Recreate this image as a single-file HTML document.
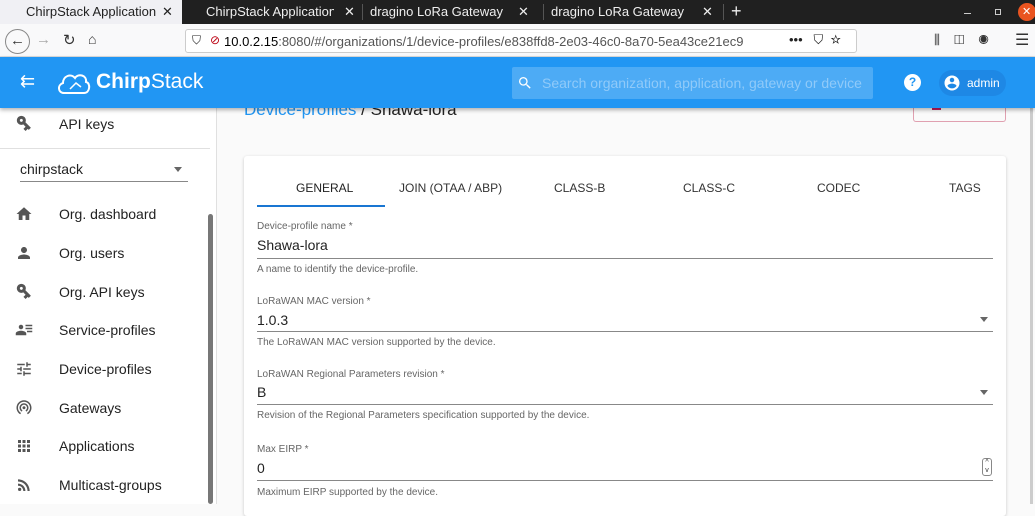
<!DOCTYPE html>
<html><head><meta charset="utf-8"><style>
*{box-sizing:border-box;margin:0;padding:0}
body{width:1035px;height:504px;overflow:hidden;font-family:"Liberation Sans",sans-serif;background:#fafafa;position:relative}
.abs{position:absolute}
.tabbar{left:0;top:0;width:1035px;height:24px;background:#202020}
.tab{top:0;height:24px;font-size:13px;color:#eee;padding-top:4px;white-space:nowrap;overflow:hidden}
.x{position:absolute;top:4px;font-size:13px;color:#eee}
.nav{left:0;top:24px;width:1035px;height:33px;background:#f9f9fa;border-bottom:1px solid #ddd}
.url{left:185px;top:29px;width:672px;height:24px;border:1px solid #ccc;border-radius:3px;background:#fff;font-size:13px;color:#222;padding:4px 0 0 38px}
.app{left:0;top:57px;width:1035px;height:51px;background:#2196f3;box-shadow:0 2px 4px rgba(0,0,0,.3);z-index:3}
.side{left:0;top:108px;width:217px;height:396px;background:#fff;border-right:1px solid #e0e0e0}
.si{left:59px;font-size:14px;color:#222}
.ic{left:15px;fill:#555}
.lbl{font-size:10px;color:#666;left:257px}
.val{font-size:14px;color:#222;left:257px}
.line{left:257px;width:736px;height:1px;background:#888}
.help{font-size:10px;color:#666;left:257px}
.tt{top:181px;font-size:12px;color:#333}
</style></head><body>
<div class="abs tabbar"></div>
<div class="abs" style="left:0;top:0;width:182px;height:24px;background:#f0f0f4"></div>
<div class="abs tab" style="left:26px;width:130px;color:#222">ChirpStack Application Server</div>
<span class="x" style="left:162px;color:#222">✕</span>
<div class="abs tab" style="left:206px;width:128px">ChirpStack Application Server</div>
<span class="x" style="left:344px">✕</span>
<div class="abs" style="left:362px;top:4px;width:1px;height:16px;background:#555"></div>
<div class="abs tab" style="left:370px">dragino LoRa Gateway</div>
<span class="x" style="left:518px">✕</span>
<div class="abs" style="left:543px;top:4px;width:1px;height:16px;background:#555"></div>
<div class="abs tab" style="left:551px">dragino LoRa Gateway</div>
<span class="x" style="left:702px">✕</span>
<div class="abs" style="left:723px;top:4px;width:1px;height:16px;background:#555"></div>
<div class="abs tab" style="left:731px;font-size:18px;top:-3px">+</div>
<div class="abs" style="left:964px;top:13px;width:7px;height:1px;background:#ccc"></div>
<div class="abs" style="left:995px;top:9px;width:6px;height:6px;border:1px solid #ccc"></div>
<div class="abs" style="left:1018px;top:3px;width:18px;height:18px;border-radius:50%;background:#e95420;color:#fff;font-size:11px;padding:2px 0 0 4px">✕</div>
<div class="abs nav"></div>
<div class="abs" style="left:5px;top:29px;width:25px;height:25px;border:1px solid #888;border-radius:50%;font-size:15px;text-align:center;line-height:22px;color:#333">←</div>
<div class="abs" style="left:36px;top:31px;font-size:15px;color:#aaa">→</div>
<div class="abs" style="left:63px;top:31px;font-size:15px;color:#333">↻</div>
<div class="abs" style="left:88px;top:31px;font-size:14px;color:#333">⌂</div>
<div class="abs url"><span style="position:absolute;left:6px;top:3px;font-size:12px">⛉</span><span style="position:absolute;left:24px;top:3px;color:#b01;font-size:12px">⊘</span><b style="font-weight:normal;color:#000">10.0.2.15</b><span style="color:#555">:8080/#/organizations/1/device-profiles/e838ffd8-2e03-46c0-8a70-5ea43ce21ec9</span><span style="position:absolute;left:603px;top:2px">•••&nbsp;&nbsp;&nbsp;⛉&nbsp;&nbsp;☆</span></div>
<div class="abs" style="left:934px;top:32px;font-size:13px;color:#333;letter-spacing:14px">⫼◫◉</div>
<div class="abs" style="left:1015px;top:30px;font-size:16px;color:#333">☰</div>
<div class="abs app">
 <div class="abs" style="left:20px;top:14px;color:#fff;font-size:18px">⇇</div>
 <svg class="abs" style="left:56px;top:10px" width="36" height="30" viewBox="0 0 36 30"><path d="M8 26 C2 26 1 18 7 16 C7 9 15 6 19 11 C22 6 31 8 30 15 C35 16 34 26 28 26 Z" fill="none" stroke="#fff" stroke-width="2"/><path d="M14 22 L20 16 L25 20" fill="none" stroke="#fff" stroke-width="1.5"/></svg>
 <div class="abs" style="left:96px;top:13px;color:#fff;font-size:21px"><b>Chirp</b>Stack</div>
 <div class="abs" style="left:512px;top:10px;width:361px;height:32px;background:#4dabf5;border-radius:2px"><svg class="abs" style="left:5px;top:8px" width="16" height="16" viewBox="0 0 24 24"><path fill="#fff" d="M15.5 14h-.79l-.28-.27A6.47 6.47 0 0016 9.5 6.5 6.5 0 109.5 16c1.61 0 3.09-.59 4.23-1.57l.27.28v.79l5 4.99L20.49 19l-4.99-5zm-6 0C7.01 14 5 11.99 5 9.5S7.01 5 9.5 5 14 7.01 14 9.5 11.99 14 9.5 14z"/></svg><span style="position:absolute;left:30px;top:8px;color:#90caf9;font-size:14px">Search organization, application, gateway or device</span></div>
 <div class="abs" style="left:904px;top:17px;width:17px;height:17px;border-radius:50%;background:#fff;color:#2196f3;font-size:12px;font-weight:bold;text-align:center;line-height:17px">?</div>
 <div class="abs" style="left:939px;top:13px;width:67px;height:26px;border-radius:13px;background:#1e88e5"><svg class="abs" style="left:4px;top:4px" width="18" height="18" viewBox="0 0 24 24"><path fill="#fff" d="M12 2C6.48 2 2 6.48 2 12s4.48 10 10 10 10-4.48 10-10S17.52 2 12 2zm0 3c1.66 0 3 1.34 3 3s-1.34 3-3 3-3-1.34-3-3 1.34-3 3-3zm0 14.2c-2.5 0-4.71-1.28-6-3.22.03-1.99 4-3.08 6-3.08 1.99 0 5.97 1.09 6 3.08-1.29 1.94-3.5 3.22-6 3.22z"/></svg><span class="abs" style="left:28px;top:6px;color:#fff;font-size:12px">admin</span></div>
</div>
<div class="abs side">
 <svg class="abs ic" style="top:6px;transform:rotate(45deg)" width="18" height="18" viewBox="0 0 24 24"><path d="M12.65 10C11.83 7.67 9.61 6 7 6c-3.31 0-6 2.69-6 6s2.69 6 6 6c2.61 0 4.83-1.67 5.65-4H17v4h4v-4h2v-4H12.65zM7 14c-1.1 0-2-.9-2-2s.9-2 2-2 2 .9 2 2-.9 2-2 2z"/></svg>
 <div class="abs si" style="top:8px">API keys</div>
 <div class="abs" style="left:0;top:40px;width:210px;height:1px;background:#e0e0e0"></div>
 <div class="abs" style="left:20px;top:53px;font-size:14px;color:#222">chirpstack</div>
 <div class="abs" style="left:174px;top:59px;border:4px solid transparent;border-top:5px solid #666"></div>
 <div class="abs" style="left:20px;top:73px;width:168px;height:1px;background:#888"></div>
 <div class="abs si" style="top:98px">Org. dashboard</div>
 <div class="abs si" style="top:137px">Org. users</div>
 <div class="abs si" style="top:176px">Org. API keys</div>
 <div class="abs si" style="top:214px">Service-profiles</div>
 <div class="abs si" style="top:253px">Device-profiles</div>
 <div class="abs si" style="top:292px">Gateways</div>
 <div class="abs si" style="top:330px">Applications</div>
 <div class="abs si" style="top:369px">Multicast-groups</div>
 <svg class="abs ic" style="top:97px" width="18" height="18" viewBox="0 0 24 24"><path d="M10 20v-6h4v6h5v-8h3L12 3 2 12h3v8z"/></svg>
 <svg class="abs ic" style="top:136px" width="18" height="18" viewBox="0 0 24 24"><path d="M12 12c2.21 0 4-1.79 4-4s-1.79-4-4-4-4 1.79-4 4 1.79 4 4 4zm0 2c-2.67 0-8 1.34-8 4v2h16v-2c0-2.66-5.33-4-8-4z"/></svg>
 <svg class="abs ic" style="top:174px;transform:rotate(45deg)" width="18" height="18" viewBox="0 0 24 24"><path d="M12.65 10C11.83 7.67 9.61 6 7 6c-3.31 0-6 2.69-6 6s2.69 6 6 6c2.61 0 4.83-1.67 5.65-4H17v4h4v-4h2v-4H12.65zM7 14c-1.1 0-2-.9-2-2s.9-2 2-2 2 .9 2 2-.9 2-2 2z"/></svg>
 <svg class="abs ic" style="top:213px" width="18" height="18" viewBox="0 0 24 24"><path d="M8 11c1.66 0 3-1.34 3-3S9.66 5 8 5 5 6.34 5 8s1.34 3 3 3zm0 2c-2.33 0-7 1.17-7 3.5V19h14v-2.5C15 14.17 10.33 13 8 13zM14 5h9v2h-9zM14 9h9v2h-9zM16 13h7v2h-7z"/></svg>
 <svg class="abs ic" style="top:252px" width="18" height="18" viewBox="0 0 24 24"><path d="M3 17v2h6v-2H3zM3 5v2h10V5H3zm10 16v-2h8v-2h-8v-2h-2v6h2zM7 9v2H3v2h4v2h2V9H7zm14 4v-2H11v2h10zm-6-4h2V7h4V5h-4V3h-2v6z"/></svg>
 <svg class="abs ic" style="top:290px" width="18" height="18" viewBox="0 0 24 24"><path d="M12 11c-1.1 0-2 .9-2 2s.9 2 2 2 2-.9 2-2-.9-2-2-2zm6 2c0-3.31-2.69-6-6-6s-6 2.69-6 6c0 2.22 1.21 4.15 3 5.19l1-1.74c-1.19-.7-2-1.970-2-3.45 0-2.21 1.79-4 4-4s4 1.79 4 4c0 1.48-.81 2.75-2 3.450l1 1.74c1.79-1.04 3-2.97 3-5.19zM12 3C6.48 3 2 7.48 2 13c0 3.7 2.01 6.92 4.99 8.65l1-1.73C5.61 18.53 4 15.96 4 13c0-4.42 3.58-8 8-8s8 3.58 8 8c0 2.96-1.61 5.53-4 6.92l1 1.73c2.99-1.73 5-4.95 5-8.65 0-5.52-4.48-10-10-10z"/></svg>
 <svg class="abs ic" style="top:329px" width="18" height="18" viewBox="0 0 24 24"><path d="M4 8h4V4H4v4zm6 12h4v-4h-4v4zm-6 0h4v-4H4v4zm0-6h4v-4H4v4zm6 0h4v-4h-4v4zm6-10v4h4V4h-4zm-6 4h4V4h-4v4zm6 6h4v-4h-4v4zm0 6h4v-4h-4v4z"/></svg>
 <svg class="abs ic" style="top:368px" width="18" height="18" viewBox="0 0 24 24"><circle cx="6.18" cy="17.82" r="2.18"/><path d="M4 4.44v2.83c7.03 0 12.73 5.7 12.73 12.73h2.83c0-8.59-6.97-15.56-15.56-15.56zm0 5.66v2.83c3.9 0 7.07 3.17 7.07 7.07h2.830c0-5.47-4.43-9.9-9.9-9.9z"/></svg>
 <div class="abs" style="left:208px;top:106px;width:5px;height:290px;border-radius:3px;background:#777"></div>
</div>
<div class="abs" style="left:244px;top:100px;font-size:17px;color:#2196f3">Device-profiles <span style="color:#222">/ Shawa-lora</span></div>
<div class="abs" style="left:913px;top:100px;width:93px;height:22px;border:1px solid #e0a0b0;border-top:none;border-radius:0 0 3px 3px"><div class="abs" style="left:18px;top:3px;width:9px;height:7px;background:#c2185b"></div></div>
<div class="abs" style="left:244px;top:156px;width:762px;height:360px;background:#fff;box-shadow:0 1px 3px rgba(0,0,0,.2);border-radius:3px"></div>
<div class="abs tt" style="left:296px;color:#222">GENERAL</div>
<div class="abs tt" style="left:399px">JOIN (OTAA / ABP)</div>
<div class="abs tt" style="left:554px">CLASS-B</div>
<div class="abs tt" style="left:683px">CLASS-C</div>
<div class="abs tt" style="left:817px">CODEC</div>
<div class="abs tt" style="left:949px">TAGS</div>
<div class="abs" style="left:257px;top:205px;width:128px;height:2px;background:#1976d2"></div>
<div class="abs lbl" style="top:221px">Device-profile name *</div>
<div class="abs val" style="top:237px">Shawa-lora</div>
<div class="abs line" style="top:258px"></div>
<div class="abs help" style="top:264px">A name to identify the device-profile.</div>
<div class="abs lbl" style="top:296px">LoRaWAN MAC version *</div>
<div class="abs val" style="top:312px">1.0.3</div>
<div class="abs" style="left:980px;top:317px;border:4px solid transparent;border-top:5px solid #666"></div>
<div class="abs line" style="top:331px"></div>
<div class="abs help" style="top:337px">The LoRaWAN MAC version supported by the device.</div>
<div class="abs lbl" style="top:369px">LoRaWAN Regional Parameters revision *</div>
<div class="abs val" style="top:384px">B</div>
<div class="abs" style="left:980px;top:390px;border:4px solid transparent;border-top:5px solid #666"></div>
<div class="abs line" style="top:404px"></div>
<div class="abs help" style="top:410px">Revision of the Regional Parameters specification supported by the device.</div>
<div class="abs lbl" style="top:444px">Max EIRP *</div>
<div class="abs val" style="top:460px">0</div>
<div class="abs" style="left:982px;top:458px;width:10px;height:18px;border:1px solid #888;border-radius:3px;font-size:7px;text-align:center;line-height:8px;color:#333">^<br>v</div>
<div class="abs line" style="top:480px"></div>
<div class="abs help" style="top:487px">Maximum EIRP supported by the device.</div>
<div class="abs" style="left:1030px;top:108px;width:3px;height:396px;background:#ccc"></div>
</body></html>
